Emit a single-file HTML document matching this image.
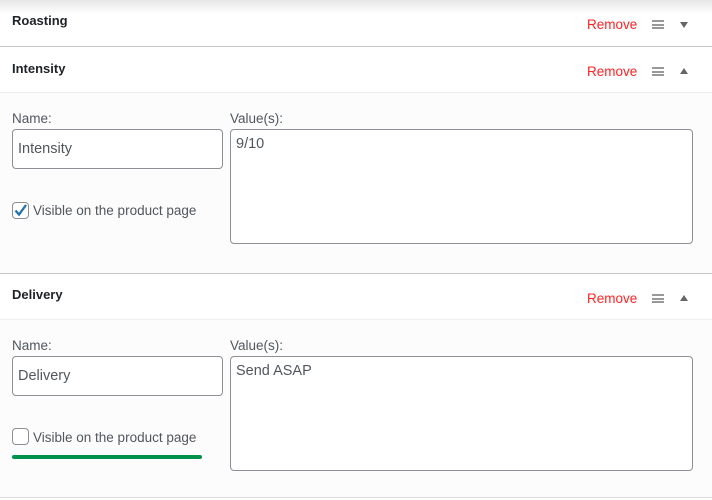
<!DOCTYPE html>
<html><head><meta charset="utf-8"><style>
*{box-sizing:border-box;margin:0;padding:0}
body{width:712px;height:500px;overflow:hidden;background:#fff;font-family:"Liberation Sans",sans-serif;font-size:13px;color:#3c434a;position:relative}
.abs{position:absolute}
.shadow{left:0;top:0;width:712px;height:14px;background:linear-gradient(#e6e6e6,#fff)}
.h{font-weight:bold;color:#1d2327;font-size:13px}
.rm{color:#f22;font-size:13.5px}
.line{left:0;width:712px;height:1px}
.body{left:0;width:712px;background:#fcfcfc}
.lbl{color:#50575e;font-size:13.5px}
.inp{background:#fff;border:1px solid #8c8f94;border-radius:4px;color:#50575e;font-size:14.5px;padding:0 0 0 5px}
.ham{width:12px;height:9px;border-top:2px solid #999;border-bottom:2px solid #999}
.ham:after{content:"";display:block;height:2px;background:#999;margin-top:1.5px}
.cb{width:17px;height:17px;border:1px solid #8c8f94;border-radius:4px;background:#fff}
</style></head><body>
<div class="abs shadow"></div>
<div class="abs h" style="left:12px;top:13px">Roasting</div>
<div class="abs rm" style="left:587px;top:17px">Remove</div>
<div class="abs ham" style="left:652px;top:20px"></div>
<svg class="abs" style="left:679px;top:21px" width="10" height="8"><path d="M1 1H9L5 7Z" fill="#666"/></svg>
<div class="abs line" style="top:46px;background:#c3c4c7"></div>
<div class="abs h" style="left:12px;top:61px">Intensity</div>
<div class="abs rm" style="left:587px;top:64px">Remove</div>
<div class="abs ham" style="left:652px;top:67px"></div>
<svg class="abs" style="left:679px;top:67px" width="10" height="8"><path d="M1 7H9L5 1Z" fill="#666"/></svg>
<div class="abs body" style="top:92px;height:181px;border-top:1px solid #eee"></div>
<div class="abs lbl" style="left:12px;top:111px">Name:</div>
<div class="abs lbl" style="left:230px;top:111px">Value(s):</div>
<div class="abs inp" style="left:12px;top:129px;width:211px;height:40px;line-height:38px">Intensity</div>
<div class="abs inp" style="left:230px;top:129px;width:463px;height:115px;padding-top:6px">9/10</div>
<div class="abs cb" style="left:12px;top:202px"></div>
<svg class="abs" style="left:12px;top:202px" width="17" height="17"><path d="M3.5 8.5L7 12.5L14 3" stroke="#2271b1" stroke-width="2.3" fill="none"/></svg>
<div class="abs lbl" style="left:33px;top:203px">Visible on the product page</div>
<div class="abs line" style="top:273px;background:#c3c4c7"></div>
<div class="abs h" style="left:12px;top:287px">Delivery</div>
<div class="abs rm" style="left:587px;top:291px">Remove</div>
<div class="abs ham" style="left:652px;top:294px"></div>
<svg class="abs" style="left:679px;top:294px" width="10" height="8"><path d="M1 7H9L5 1Z" fill="#666"/></svg>
<div class="abs body" style="top:319px;height:178px;border-top:1px solid #eee"></div>
<div class="abs lbl" style="left:12px;top:338px">Name:</div>
<div class="abs lbl" style="left:230px;top:338px">Value(s):</div>
<div class="abs inp" style="left:12px;top:356px;width:211px;height:40px;line-height:38px">Delivery</div>
<div class="abs inp" style="left:230px;top:356px;width:463px;height:115px;padding-top:6px">Send ASAP</div>
<div class="abs cb" style="left:12px;top:428px"></div>
<div class="abs lbl" style="left:33px;top:430px">Visible on the product page</div>
<div class="abs" style="left:12px;top:455px;width:190px;height:4px;background:#00914a;border-radius:2px"></div>
<div class="abs line" style="top:497px;background:#dcdcde"></div>
</body></html>
